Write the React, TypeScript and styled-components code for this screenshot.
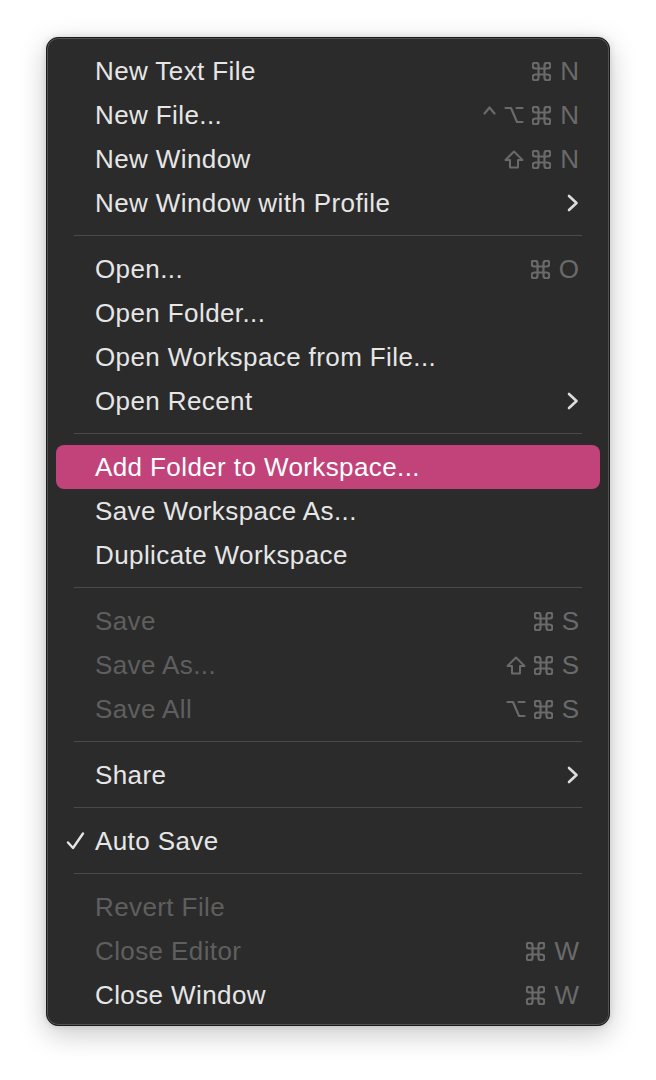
import React from 'react'
import styled, { createGlobalStyle } from 'styled-components'

type Mod = 'cmd' | 'opt' | 'shift' | 'ctrl'

type Item =
    | { kind: 'sep' }
    | {
          kind?: 'item'
          label: string
          mods?: Mod[]
          letter?: string
          submenu?: boolean
          disabled?: boolean
          active?: boolean
          checked?: boolean
      }

const items: Item[] = [
    { label: 'New Text File', mods: ['cmd'], letter: 'N' },
    { label: 'New File...', mods: ['ctrl', 'opt', 'cmd'], letter: 'N' },
    { label: 'New Window', mods: ['shift', 'cmd'], letter: 'N' },
    { label: 'New Window with Profile', submenu: true },
    { kind: 'sep' },
    { label: 'Open...', mods: ['cmd'], letter: 'O' },
    { label: 'Open Folder...' },
    { label: 'Open Workspace from File...' },
    { label: 'Open Recent', submenu: true },
    { kind: 'sep' },
    { label: 'Add Folder to Workspace...', active: true },
    { label: 'Save Workspace As...' },
    { label: 'Duplicate Workspace' },
    { kind: 'sep' },
    { label: 'Save', mods: ['cmd'], letter: 'S', disabled: true },
    { label: 'Save As...', mods: ['shift', 'cmd'], letter: 'S', disabled: true },
    { label: 'Save All', mods: ['opt', 'cmd'], letter: 'S', disabled: true },
    { kind: 'sep' },
    { label: 'Share', submenu: true },
    { kind: 'sep' },
    { label: 'Auto Save', checked: true },
    { kind: 'sep' },
    { label: 'Revert File', disabled: true },
    { label: 'Close Editor', mods: ['cmd'], letter: 'W', disabled: true },
    { label: 'Close Window', mods: ['cmd'], letter: 'W' },
]

const ModIcon = ({ mod }: { mod: Mod }) => {
    const common = {
        fill: 'none',
        stroke: 'currentColor',
        strokeLinecap: 'round' as const,
        strokeLinejoin: 'round' as const,
    }
    if (mod === 'cmd')
        return (
            <svg width="19" height="19" viewBox="2.4 2.4 19.2 19.2">
                <path
                    {...common}
                    strokeWidth="2.2"
                    d="M15 6v12a3 3 0 1 0 3-3H6a3 3 0 1 0 3 3V6a3 3 0 1 0-3 3h12a3 3 0 1 0-3-3"
                />
            </svg>
        )
    if (mod === 'opt')
        return (
            <svg width="20" height="18" viewBox="0 0 20 18">
                <path {...common} strokeWidth="2.2" d="M1.5 2h5.5l6 14h5.5" />
                <path {...common} strokeWidth="2.2" d="M12.5 2h6" />
            </svg>
        )
    if (mod === 'shift')
        return (
            <svg width="20" height="19" viewBox="0 0 20 19">
                <path {...common} strokeWidth="2" d="M10 1.5 L18.5 10 H14 V17.5 H6 V10 H1.5 Z" />
            </svg>
        )
    return (
        <svg width="13" height="20" viewBox="0 0 13 20">
            <path {...common} strokeWidth="2.2" d="M1.5 8.5 L6.5 2.5 L11.5 8.5" />
        </svg>
    )
}

const App = () => {
    return (
        <>
            <GlobalStyle />
            <Page>
                <Menu>
                    {items.map((item, i) =>
                        item.kind === 'sep' ? (
                            <Separator key={i} />
                        ) : (
                            <Row key={i} $active={item.active} $disabled={item.disabled}>
                                <CheckSlot>
                                    {item.checked && (
                                        <svg width="19" height="18" viewBox="0 0 19 18">
                                            <path
                                                d="M2 10.5 L7 16 L17 1.5"
                                                fill="none"
                                                stroke="#e4e4e4"
                                                strokeWidth="2.4"
                                                strokeLinecap="round"
                                                strokeLinejoin="round"
                                            />
                                        </svg>
                                    )}
                                </CheckSlot>
                                <Label>{item.label}</Label>
                                {item.mods && (
                                    <Shortcut>
                                        {item.mods.map((m) => (
                                            <ModIcon key={m} mod={m} />
                                        ))}
                                        <Letter>{item.letter}</Letter>
                                    </Shortcut>
                                )}
                                {item.submenu && (
                                    <svg width="13" height="18" viewBox="0 0 13 18">
                                        <path
                                            d="M3 2 L10.5 9 L3 16"
                                            fill="none"
                                            stroke="#dcdcdc"
                                            strokeWidth="2.6"
                                            strokeLinecap="round"
                                            strokeLinejoin="round"
                                        />
                                    </svg>
                                )}
                            </Row>
                        ),
                    )}
                </Menu>
            </Page>
        </>
    )
}

const GlobalStyle = createGlobalStyle`
    body {
        margin: 0;
        background: #ffffff;
        font-family: "Liberation Sans", Arial, sans-serif;
    }
`
const Page = styled.div`
    padding: 37px 0 0 46px;
    width: 656px;
    height: 1080px;
    box-sizing: border-box;
`
const Menu = styled.div`
    width: 564px;
    box-sizing: border-box;
    padding: 11px 9px 8px;
    background: #2b2b2b;
    border: 1px solid #1b1b1b;
    border-radius: 12px;
    box-shadow:
        inset 0 0 0 1px #525252,
        0 8px 28px rgba(0, 0, 0, 0.22),
        0 0 6px rgba(0, 0, 0, 0.12);
    display: flex;
    flex-direction: column;
`
const Row = styled.div<{ $active?: boolean; $disabled?: boolean }>`
    height: 44px;
    display: flex;
    align-items: center;
    padding: 0 21px 0 0;
    border-radius: 8px;
    font-size: 26px;
    letter-spacing: 0.4px;
    color: ${(p) => (p.$active ? '#ffffff' : p.$disabled ? '#5f5f5f' : '#e6e6e6')};
    background: ${(p) => (p.$active ? '#c1437a' : 'transparent')};
`
const CheckSlot = styled.div`
    width: 39px;
    display: flex;
    justify-content: flex-end;
    padding-right: 10px;
    box-sizing: border-box;
`
const Label = styled.span`
    flex: 1;
    white-space: nowrap;
`
const Shortcut = styled.span`
    display: flex;
    align-items: center;
    gap: 8px;
    color: #6a6a6a;
`
const Letter = styled.span`
    font-size: 26px;
    letter-spacing: 0;
    margin-left: 1px;
`
const Separator = styled.div`
    height: 1px;
    margin: 10px 18px 11px;
    background: #4a4a4a;
`

export default App
